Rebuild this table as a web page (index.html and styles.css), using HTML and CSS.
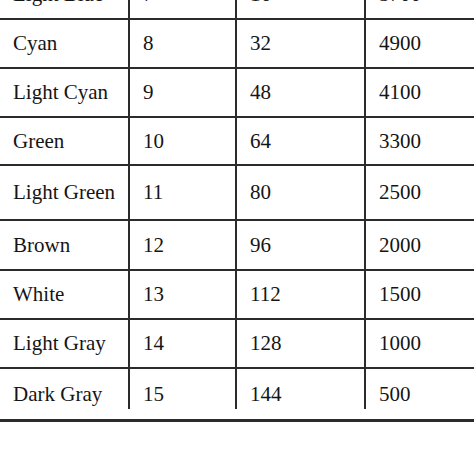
FILE: index.html
```html
<!DOCTYPE html>
<html>
<head>
<meta charset="utf-8">
<link rel="stylesheet" href="styles.css">
</head>
<body>
<div class="table">
  <div class="row first"><div class="cell">Light Blue</div><div class="cell">7</div><div class="cell">16</div><div class="cell">5700</div></div>
  <div class="row"><div class="cell">Cyan</div><div class="cell">8</div><div class="cell">32</div><div class="cell">4900</div></div>
  <div class="row"><div class="cell">Light Cyan</div><div class="cell">9</div><div class="cell">48</div><div class="cell">4100</div></div>
  <div class="row short"><div class="cell">Green</div><div class="cell">10</div><div class="cell">64</div><div class="cell">3300</div></div>
  <div class="row tall"><div class="cell">Light Green</div><div class="cell">11</div><div class="cell">80</div><div class="cell">2500</div></div>
  <div class="row mid"><div class="cell">Brown</div><div class="cell">12</div><div class="cell">96</div><div class="cell">2000</div></div>
  <div class="row"><div class="cell">White</div><div class="cell">13</div><div class="cell">112</div><div class="cell">1500</div></div>
  <div class="row"><div class="cell">Light Gray</div><div class="cell">14</div><div class="cell">128</div><div class="cell">1000</div></div>
  <div class="row last"><div class="cell">Dark Gray</div><div class="cell">15</div><div class="cell">144</div><div class="cell">500</div></div>
</div>
</body>
</html>
```
FILE: styles.css
```css
html, body {
  margin: 0;
  padding: 0;
  background: #ffffff;
}

body {
  font-family: "Liberation Serif", "Times New Roman", serif;
  font-size: 21px;
  color: #151515;
}

.table {
  margin-top: -30px;
  width: 474px;
}

.row {
  display: grid;
  grid-template-columns: 128px 107px 129px 1fr;
  height: 49px;
  box-sizing: border-box;
  border-top: 2px solid #2b2b2b;
}

.row.first {
  border-top: none;
  height: 48px;
}

.row.short { height: 48px; }
.row.tall { height: 55px; }
.row.mid { height: 50px; }

.cell {
  display: flex;
  align-items: center;
  padding-left: 13px;
  white-space: nowrap;
  box-sizing: border-box;
}

.cell + .cell {
  border-left: 2px solid #2b2b2b;
}

.row.last {
  height: 50px;
  border-bottom: 3px solid #2b2b2b;
  box-sizing: content-box;
}

.row.last .cell {
  padding-bottom: 0;
}

.row.last .cell + .cell {
  border-left: none;
  padding-left: 15px;
  background: linear-gradient(#2b2b2b, #2b2b2b) left top / 2px 40px no-repeat;
}
```
